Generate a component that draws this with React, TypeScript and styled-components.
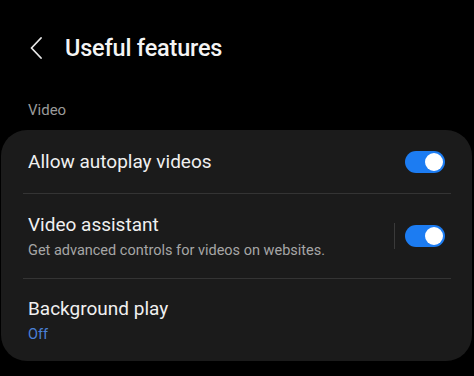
import React from "react";
import styled, {createGlobalStyle} from "styled-components";

const GlobalStyle = createGlobalStyle`
    html, body {
        margin: 0;
        padding: 0;
        background: #000;
    }
    body {
        font-family: Roboto, "Liberation Sans", sans-serif;
        color: #f2f2f2;
        width: 474px;
        height: 376px;
        overflow: hidden;
    }
`;

const Page = styled.div`
    display: flex;
    flex-direction: column;
    width: 474px;
`;

const Header = styled.div`
    display: flex;
    align-items: center;
    height: 96px;
    padding-left: 30px;
    gap: 23px;
`;

const BackButton = styled.button`
    display: flex;
    align-items: center;
    justify-content: center;
    padding: 0;
    border: none;
    background: none;
    width: 12px;
    height: 22px;
`;

const Title = styled.h1`
    margin: 0;
    font-size: 23.5px;
    font-weight: 500;
    color: #f4f4f4;
    letter-spacing: -0.2px;
`;

const SectionLabel = styled.div`
    padding: 5px 0 0 28px;
    height: 29px;
    font-size: 15px;
    color: #9a9a9a;
`;

const Card = styled.div`
    margin: 0 2px 0 1px;
    background: #1b1b1b;
    border-radius: 26px;
    display: flex;
    flex-direction: column;
`;

const Row = styled.div<{ $height: number }>`
    display: flex;
    align-items: center;
    height: ${({$height}) => $height}px;
    padding: 0 27px 0 27px;
`;

const TextBlock = styled.div`
    flex: 1;
    display: flex;
    flex-direction: column;
    gap: 6px;
`;

const RowTitle = styled.div`
    font-size: 19px;
    color: #f0f0f0;
`;

const RowSub = styled.div<{ $accent?: boolean }>`
    font-size: 14.5px;
    color: ${({$accent}) => ($accent ? "#4a80d6" : "#a6a6a6")};
`;

const Divider = styled.div`
    height: 1px;
    margin: 0 21px 0 22px;
    background: #343434;
`;

const VerticalSep = styled.div`
    width: 1px;
    height: 26px;
    background: #3a3a3a;
    margin-right: 10px;
`;

const Toggle = styled.div<{ $on: boolean }>`
    width: 40px;
    height: 22px;
    border-radius: 11px;
    background: ${({$on}) => ($on ? "#1c7cf2" : "#555")};
    display: flex;
    align-items: center;
    justify-content: ${({$on}) => ($on ? "flex-end" : "flex-start")};
    padding: 0 2px;
    box-sizing: border-box;
`;

const Knob = styled.div`
    width: 18px;
    height: 18px;
    border-radius: 50%;
    background: #fff;
`;

const ChevronLeft = () => (
    <svg width="12" height="22" viewBox="0 0 12 22" fill="none">
        <path d="M11 1 L1.5 11 L11 21" stroke="#e8e8e8" strokeWidth="1.8" strokeLinecap="round" strokeLinejoin="round"/>
    </svg>
);

export default function App() {
    return (
        <Page>
            <GlobalStyle/>
            <Header>
                <BackButton aria-label="Back"><ChevronLeft/></BackButton>
                <Title>Useful features</Title>
            </Header>
            <SectionLabel>Video</SectionLabel>
            <Card>
                <Row $height={63}>
                    <TextBlock>
                        <RowTitle>Allow autoplay videos</RowTitle>
                    </TextBlock>
                    <Toggle $on><Knob/></Toggle>
                </Row>
                <Divider/>
                <Row $height={84}>
                    <TextBlock>
                        <RowTitle>Video assistant</RowTitle>
                        <RowSub>Get advanced controls for videos on websites.</RowSub>
                    </TextBlock>
                    <VerticalSep/>
                    <Toggle $on><Knob/></Toggle>
                </Row>
                <Divider/>
                <Row $height={82}>
                    <TextBlock>
                        <RowTitle>Background play</RowTitle>
                        <RowSub $accent>Off</RowSub>
                    </TextBlock>
                </Row>
            </Card>
        </Page>
    );
}
